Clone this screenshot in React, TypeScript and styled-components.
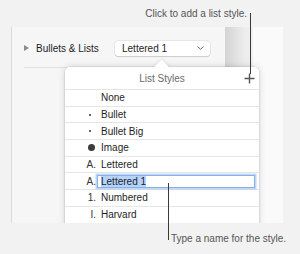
import React from 'react';
import styled, {createGlobalStyle} from 'styled-components';

const GlobalStyle = createGlobalStyle`
  html, body {
    margin: 0;
    padding: 0;
    background: #f2f2f2;
  }
  body {
    font-family: "Liberation Sans", Helvetica, Arial, sans-serif;
    -webkit-font-smoothing: antialiased;
  }
`;

type Marker = {kind: 'none' | 'dot' | 'image' | 'text'; label?: string};

interface IStyle {
  name: string;
  marker: Marker;
  editing?: boolean;
}

const styles: IStyle[] = [
  {name: 'None', marker: {kind: 'none'}},
  {name: 'Bullet', marker: {kind: 'dot'}},
  {name: 'Bullet Big', marker: {kind: 'dot'}},
  {name: 'Image', marker: {kind: 'image'}},
  {name: 'Lettered', marker: {kind: 'text', label: 'A.'}},
  {name: 'Lettered 1', marker: {kind: 'text', label: 'A.'}, editing: true},
  {name: 'Numbered', marker: {kind: 'text', label: '1.'}},
  {name: 'Harvard', marker: {kind: 'text', label: 'I.'}},
];

const Chevron = () => (
  <svg width="7" height="4" viewBox="0 0 7 4">
    <path d="M0.5 0.5 L3.5 3.2 L6.5 0.5" fill="none" stroke="#666" strokeWidth="1"/>
  </svg>
);

const Plus = () => (
  <svg width="11" height="11" viewBox="0 0 11 11">
    <path d="M5.5 0.5 V10.5 M0.5 5.5 H10.5" stroke="#555" strokeWidth="1.4"/>
  </svg>
);

const renderMarker = (m: Marker) => {
  if (m.kind === 'dot') return <Dot/>;
  if (m.kind === 'image') return <ImageDot/>;
  if (m.kind === 'text') return m.label;
  return null;
};

export default function App() {
  return (
    <Page>
      <GlobalStyle/>
      <TopBar>Click to add a list style.</TopBar>
      <Stage>
        <Inspector>
          <SectionRow>
            <Disclosure/>
            <SectionTitle>Bullets &amp; Lists</SectionTitle>
            <Dropdown>
              Lettered 1
              <Chevron/>
            </Dropdown>
          </SectionRow>
          <Divider/>
        </Inspector>
        <ScrollShade/>
        <Gutter/>
        <Popover>
          <PopoverHeader>
            List Styles
            <AddButton><Plus/></AddButton>
          </PopoverHeader>
          {styles.map((s) => (
            <StyleRow key={s.name}>
              <MarkerCell>{renderMarker(s.marker)}</MarkerCell>
              {s.editing ? (
                <EditField>
                  <Selected>{s.name}</Selected>
                </EditField>
              ) : (
                <StyleName>{s.name}</StyleName>
              )}
            </StyleRow>
          ))}
        </Popover>
      </Stage>
      <Footer>Type a name for the style.</Footer>
      <CalloutLine $left={250} $top={13} $height={61}/>
      <CalloutLine $left={168} $top={183} $height={57}/>
    </Page>
  );
}

const Page = styled.div`
  position: relative;
  width: 300px;
  height: 254px;
  overflow: hidden;
  background: #f2f2f2;
`;

const TopBar = styled.div`
  height: 27px;
  box-sizing: border-box;
  padding: 8px 53px 0 0;
  text-align: right;
  font-size: 10px;
  line-height: 12px;
  color: #555;
`;

const Stage = styled.div`
  position: relative;
  display: flex;
  height: 196px;
  margin-left: 11px;
  width: 272px;
  overflow: hidden;
`;

const Inspector = styled.div`
  width: 214px;
  box-sizing: border-box;
  border-left: 1px solid #dadada;
  background: #f6f6f6;
  padding-top: 13px;
`;

const SectionRow = styled.div`
  display: flex;
  align-items: center;
  height: 16px;
  padding-left: 12px;
`;

const Disclosure = styled.span`
  width: 0;
  height: 0;
  border-top: 3.5px solid transparent;
  border-bottom: 3.5px solid transparent;
  border-left: 5px solid #8a8a8a;
  margin-right: 7px;
`;

const SectionTitle = styled.span`
  font-size: 10px;
  color: #1e1e1e;
  width: 79px;
`;

const Dropdown = styled.div`
  display: flex;
  align-items: center;
  justify-content: space-between;
  width: 95px;
  height: 15px;
  box-sizing: border-box;
  padding: 0 6px 0 7px;
  background: #fff;
  border-radius: 3px;
  box-shadow: 0 0 0 0.5px rgba(0, 0, 0, 0.12), 0 1px 1px rgba(0, 0, 0, 0.12);
  font-size: 10px;
  color: #1e1e1e;
`;

const Divider = styled.div`
  height: 1px;
  margin: 11px 0 0 12px;
  background: #e1e1e1;
`;

const ScrollShade = styled.div`
  width: 28px;
  background: linear-gradient(to right, #d4d4d4, #ececec 70%, #f0f0f0);
`;

const Gutter = styled.div`
  width: 30px;
  background: #fafafa;
`;

const Popover = styled.div`
  position: absolute;
  left: 54px;
  top: 40px;
  width: 194px;
  height: 190px;
  background: #fff;
  border-radius: 5px;
  box-shadow: 0 0 0 0.5px rgba(0, 0, 0, 0.12), 0 0 7px rgba(0, 0, 0, 0.16);

  &::before {
    content: '';
    position: absolute;
    left: 90px;
    top: -9px;
    width: 13px;
    height: 13px;
    background: #fff;
    transform: rotate(45deg) translate(3px, 3px);
    box-shadow: -1px -1px 3px rgba(0, 0, 0, 0.08);
  }
`;

const PopoverHeader = styled.div`
  position: relative;
  display: flex;
  align-items: center;
  justify-content: center;
  height: 23px;
  box-sizing: border-box;
  border-bottom: 1px solid #e4e4e4;
  font-size: 10px;
  color: #6a6a6a;
  background: #fff;
  border-radius: 5px 5px 0 0;
`;

const AddButton = styled.span`
  position: absolute;
  right: 4px;
  top: 6px;
  display: flex;
`;

const StyleRow = styled.div`
  display: flex;
  align-items: center;
  height: 16.7px;
  box-sizing: border-box;
  border-bottom: 1px solid #e6e6e6;
  font-size: 10px;
  color: #1e1e1e;
`;

const MarkerCell = styled.span`
  width: 32px;
  display: flex;
  justify-content: flex-end;
  align-items: center;
  box-sizing: border-box;
  padding-right: 1px;
  color: #333;
`;

const Dot = styled.span`
  width: 2px;
  height: 2px;
  border-radius: 50%;
  background: #333;
  margin-right: 5px;
`;

const ImageDot = styled.span`
  width: 7px;
  height: 7px;
  border-radius: 50%;
  background: #3c3c3c;
  margin-right: 1px;
`;

const StyleName = styled.span`
  padding-left: 4px;
`;

const EditField = styled.div`
  display: flex;
  align-items: center;
  width: 158px;
  height: 13px;
  box-sizing: border-box;
  padding-left: 3px;
  border: 1px solid #86b0ea;
  box-shadow: 0 0 0 1.5px rgba(140, 182, 238, 0.55);
`;

const Selected = styled.span`
  background: #b5d3fb;
  line-height: 11px;
`;

const Footer = styled.div`
  padding: 10px 0 0 171px;
  font-size: 10px;
  line-height: 12px;
  color: #555;
`;

const CalloutLine = styled.div<{$left: number; $top: number; $height: number}>`
  position: absolute;
  left: ${({$left}) => $left}px;
  top: ${({$top}) => $top}px;
  width: 1px;
  height: ${({$height}) => $height}px;
  background: #3a3a3a;
`;
